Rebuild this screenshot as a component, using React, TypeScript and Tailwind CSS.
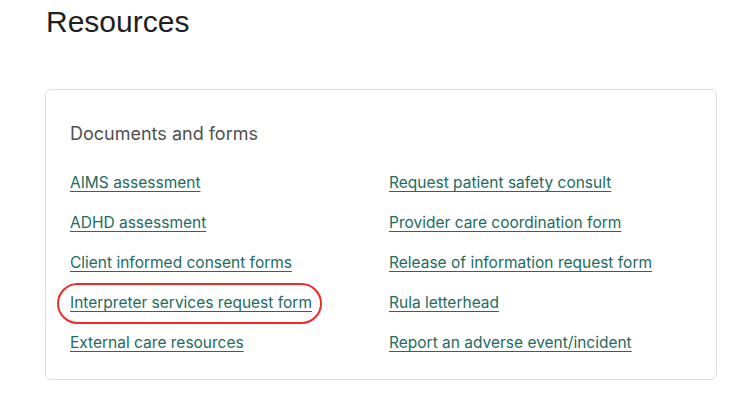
const leftLinks = [
  'AIMS assessment',
  'ADHD assessment',
  'Client informed consent forms',
  'Interpreter services request form',
  'External care resources',
];

const rightLinks = [
  'Request patient safety consult',
  'Provider care coordination form',
  'Release of information request form',
  'Rula letterhead',
  'Report an adverse event/incident',
];

function DocLink({ label, circled }: { label: string; circled?: boolean }) {
  return (
    <div className="relative h-6 flex items-center">
      <a
        href="#"
        className="text-[15.5px] leading-6 text-[#226b5f] underline underline-offset-[3px] decoration-1"
      >
        {label}
      </a>
      {circled && (
        <span className="absolute left-[-13px] top-[-8px] w-[265px] h-[41px] rounded-full border-2 border-[#ec2a2a] pointer-events-none" />
      )}
    </div>
  );
}

export default function App() {
  return (
    <div className="min-h-screen bg-white pl-[45px] pr-[21px] pt-[4px]" style={{ fontFamily: 'Inter, "Noto Sans", sans-serif' }}>
      <h1
        className="pl-px text-[30px] leading-9 text-[#1f1f21]"
        style={{ fontFamily: '"Liberation Sans", Arial, sans-serif' }}
      >
        Resources
      </h1>

      <section className="mt-[49px] w-[672px] rounded-md border border-[#dedede] px-[24px] pt-[30px] pb-[24px]">
        <h2 className="text-[18px] leading-7 text-[#4f4f4f]">Documents and forms</h2>
        <div className="mt-[23px] grid grid-cols-[319px_1fr] gap-y-4">
          {leftLinks.map((l, i) => (
            <>
              <DocLink key={l} label={l} circled={i === 3} />
              <DocLink key={rightLinks[i]} label={rightLinks[i]} />
            </>
          ))}
        </div>
      </section>
    </div>
  );
}
